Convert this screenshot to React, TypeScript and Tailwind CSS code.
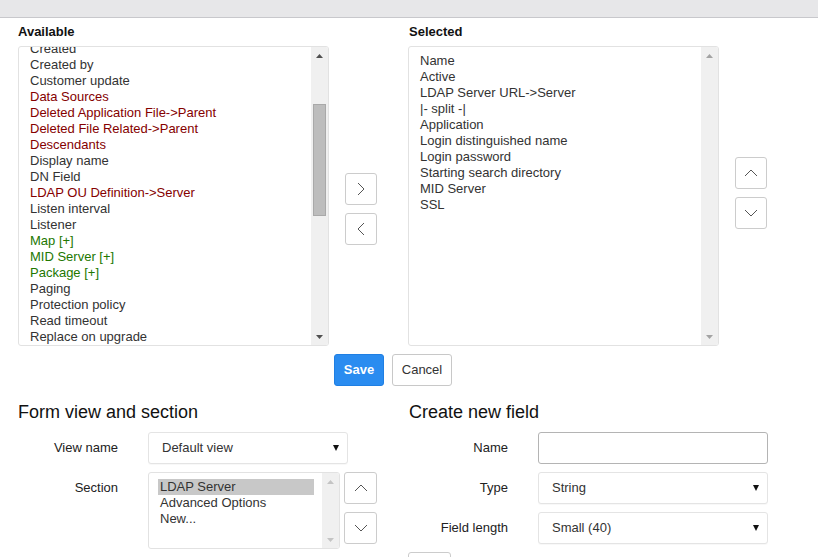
import React from "react";

type Item = { t: string; c?: "r" | "g" };

const available: Item[] = [
  { t: "Created" },
  { t: "Created by" },
  { t: "Customer update" },
  { t: "Data Sources", c: "r" },
  { t: "Deleted Application File->Parent", c: "r" },
  { t: "Deleted File Related->Parent", c: "r" },
  { t: "Descendants", c: "r" },
  { t: "Display name" },
  { t: "DN Field" },
  { t: "LDAP OU Definition->Server", c: "r" },
  { t: "Listen interval" },
  { t: "Listener" },
  { t: "Map [+]", c: "g" },
  { t: "MID Server [+]", c: "g" },
  { t: "Package [+]", c: "g" },
  { t: "Paging" },
  { t: "Protection policy" },
  { t: "Read timeout" },
  { t: "Replace on upgrade" },
];

const selected = [
  "Name",
  "Active",
  "LDAP Server URL->Server",
  "|- split -|",
  "Application",
  "Login distinguished name",
  "Login password",
  "Starting search directory",
  "MID Server",
  "SSL",
];

function Tri({ up, color }: { up: boolean; color: string }) {
  return (
    <svg width="7" height="4" viewBox="0 0 7 4" className="block">
      <polygon points={up ? "0,4 7,4 3.5,0" : "0,0 7,0 3.5,4"} fill={color} />
    </svg>
  );
}

function Chevron({ dir }: { dir: "l" | "r" | "u" | "d" }) {
  if (dir === "l" || dir === "r") {
    return (
      <svg width="8" height="14" viewBox="0 0 8 14" className="block">
        <polyline
          points={dir === "r" ? "1,1 7,7 1,13" : "7,1 1,7 7,13"}
          fill="none"
          stroke="#555"
          strokeWidth="1"
        />
      </svg>
    );
  }
  return (
    <svg width="14" height="8" viewBox="0 0 14 8" className="block">
      <polyline
        points={dir === "u" ? "1,7 7,1 13,7" : "1,1 7,7 13,1"}
        fill="none"
        stroke="#555"
        strokeWidth="1"
      />
    </svg>
  );
}

function IconButton({ dir, w = "w-[32px]" }: { dir: "l" | "r" | "u" | "d"; w?: string }) {
  return (
    <button
      className={`${w} h-[32px] flex items-center justify-center border border-[#cccccc] rounded-[3px] bg-white`}
    >
      <Chevron dir={dir} />
    </button>
  );
}

function DownTri() {
  return (
    <svg width="6" height="6" viewBox="0 0 6 6" className="block">
      <polygon points="0,0 6,0 3,6" fill="#111" />
    </svg>
  );
}

function Select({ value, w }: { value: string; w: string }) {
  return (
    <div
      className={`${w} h-[32px] flex items-center justify-between pl-[13px] pr-[8px] border border-[#e4e4e4] rounded-[3px] bg-white shadow-[0_1px_1px_rgba(0,0,0,0.03)] text-[#333]`}
    >
      <span>{value}</span>
      <DownTri />
    </div>
  );
}

export default function App() {
  return (
    <div className="w-[818px] h-[557px] overflow-hidden bg-white font-['Liberation_Sans',Arial,sans-serif] text-[13px] leading-4 text-[#333]">
      <div className="h-[18px] bg-[#e7e7e9] border-b border-[#c8c8cc]" />

      {/* Slushbucket */}
      <div className="flex pl-[18px] pt-[6px]">
        <div className="w-[311px] flex flex-col">
          <div className="font-bold text-[#111] h-4 mb-[6px]">Available</div>
          <div className="h-[300px] flex border border-[#e2e2e2] rounded-[3px] overflow-hidden">
            <div className="flex-1 overflow-hidden pl-[11px]">
              <div className="mt-[-6px]">
                {available.map((it) => (
                  <div
                    key={it.t}
                    className={`h-4 whitespace-nowrap ${
                      it.c === "r" ? "text-[#850000]" : it.c === "g" ? "text-[#227700]" : "text-[#333]"
                    }`}
                  >
                    {it.t}
                  </div>
                ))}
              </div>
            </div>
            <div className="w-[17px] bg-[#f0f0f0] flex flex-col items-center">
              <div className="h-[17px] flex items-center justify-center">
                <Tri up color="#505050" />
              </div>
              <div className="flex-1 w-full px-[2px]">
                <div className="mt-[40px] h-[112px] bg-[#bdbdbd] border border-[#a9a9a9]" />
              </div>
              <div className="h-[17px] flex items-center justify-center">
                <Tri up={false} color="#505050" />
              </div>
            </div>
          </div>
        </div>

        <div className="ml-[16px] mt-[149px] flex flex-col gap-2">
          <IconButton dir="r" />
          <IconButton dir="l" />
        </div>

        <div className="ml-[31px] w-[311px] flex flex-col">
          <div className="font-bold text-[#111] h-4 mb-[6px] pl-[1px]">Selected</div>
          <div className="h-[300px] flex border border-[#e2e2e2] rounded-[3px] overflow-hidden">
            <div className="flex-1 overflow-hidden pl-[11px] pt-[6px]">
              {selected.map((t) => (
                <div key={t} className="h-4 whitespace-nowrap">
                  {t}
                </div>
              ))}
            </div>
            <div className="w-[17px] bg-[#f0f0f0] flex flex-col items-center justify-between">
              <div className="h-[17px] flex items-center justify-center">
                <Tri up color="#a3a3a3" />
              </div>
              <div className="h-[17px] flex items-center justify-center">
                <Tri up={false} color="#a3a3a3" />
              </div>
            </div>
          </div>
        </div>

        <div className="ml-[16px] mt-[133px] flex flex-col gap-2">
          <IconButton dir="u" />
          <IconButton dir="d" />
        </div>
      </div>

      {/* Save / Cancel */}
      <div className="flex gap-2 pl-[334px] mt-[8px]">
        <button className="w-[50px] h-[32px] rounded-[3px] bg-[#2a8cf0] border border-[#1f7fe3] text-white font-bold">
          Save
        </button>
        <button className="w-[60px] h-[32px] rounded-[3px] bg-white border border-[#c8c8c8] text-[#333]">
          Cancel
        </button>
      </div>

      {/* Bottom forms */}
      <div className="flex pl-[18px] mt-[16px]">
        <div className="w-[390px] flex flex-col">
          <div className="text-[18px] leading-5 text-[#111] h-5">Form view and section</div>
          <div className="flex items-center mt-[10px]">
            <div className="w-[100px] text-right text-[#222]">View name</div>
            <div className="ml-[30px]">
              <Select value="Default view" w="w-[200px]" />
            </div>
          </div>
          <div className="flex mt-[8px]">
            <div className="w-[100px] text-right text-[#222] pt-[8px]">Section</div>
            <div className="ml-[30px] w-[192px] h-[77px] flex border border-[#e2e2e2] rounded-[3px] overflow-hidden">
              <div className="flex-1 pl-[9px] pt-[6px] pr-[8px]">
                <div className="h-4 bg-[#c8c8c8] pl-[2px] text-[#333]">LDAP Server</div>
                <div className="h-4 pl-[2px]">Advanced Options</div>
                <div className="h-4 pl-[2px]">New...</div>
              </div>
              <div className="w-[17px] bg-[#f0f0f0] flex flex-col justify-between items-center">
                <div className="h-[17px] flex items-center justify-center">
                  <Tri up color="#c4c4c4" />
                </div>
                <div className="h-[17px] flex items-center justify-center">
                  <Tri up={false} color="#c4c4c4" />
                </div>
              </div>
            </div>
            <div className="ml-[4px] flex flex-col gap-2">
              <IconButton dir="u" w="w-[33px]" />
              <IconButton dir="d" w="w-[33px]" />
            </div>
          </div>
        </div>

        <div className="flex flex-col">
          <div className="text-[18px] leading-5 text-[#111] h-5 pl-[1px]">Create new field</div>
          <div className="flex items-center mt-[10px]">
            <div className="w-[100px] text-right text-[#222]">Name</div>
            <div className="ml-[30px] w-[230px] h-[32px] border border-[#b4b4b4] rounded-[3px] bg-white" />
          </div>
          <div className="flex items-center mt-[8px]">
            <div className="w-[100px] text-right text-[#222]">Type</div>
            <div className="ml-[30px]">
              <Select value="String" w="w-[230px]" />
            </div>
          </div>
          <div className="flex items-center mt-[8px]">
            <div className="w-[100px] text-right text-[#222]">Field length</div>
            <div className="ml-[30px]">
              <Select value="Small (40)" w="w-[230px]" />
            </div>
          </div>
          <div className="mt-[8px] w-[43px] h-[32px] border border-[#cccccc] rounded-[3px] bg-white" />
        </div>
      </div>
    </div>
  );
}
